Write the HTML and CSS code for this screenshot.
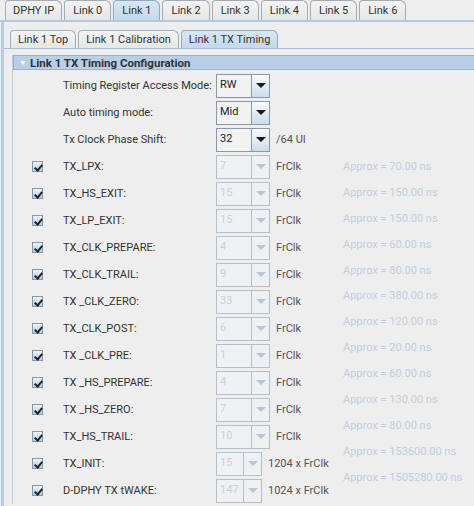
FILE: index.html
```html
<!DOCTYPE html>
<html lang="en">
<head>
    <meta charset="UTF-8">
    <title>Link 1 TX Timing</title>
    <link rel="stylesheet" href="styles.css">
</head>
<body>
    <div class="tabs top-tabs">
        <div class="tab wide">DPHY IP</div>
        <div class="tab">Link 0</div>
        <div class="tab active">Link 1</div>
        <div class="tab">Link 2</div>
        <div class="tab">Link 3</div>
        <div class="tab">Link 4</div>
        <div class="tab">Link 5</div>
        <div class="tab">Link 6</div>
    </div>

    <div class="panel">
        <div class="tabs sub-tabs">
            <div class="tab">Link 1 Top</div>
            <div class="tab">Link 1 Calibration</div>
            <div class="tab active">Link 1 TX Timing</div>
        </div>

        <div class="section">
            <div class="section-head"><span class="caret"></span>Link 1 TX Timing Configuration</div>

            <div class="form">
                <div class="rows">
                    <div class="row">
                        <div class="cell"></div>
                        <div class="label">Timing Register Access Mode:</div>
                        <div class="field"><div class="combo"><span class="value">RW</span><span class="arrow"></span></div></div>
                    </div>
                    <div class="row">
                        <div class="cell"></div>
                        <div class="label">Auto timing mode:</div>
                        <div class="field"><div class="combo"><span class="value">Mid</span><span class="arrow"></span></div></div>
                    </div>
                    <div class="row">
                        <div class="cell"></div>
                        <div class="label">Tx Clock Phase Shift:</div>
                        <div class="field"><div class="combo"><span class="value">32</span><span class="arrow"></span></div><span class="unit">/64 UI</span></div>
                    </div>
                    <div class="row">
                        <div class="cell"><span class="check"></span></div>
                        <div class="label">TX_LPX:</div>
                        <div class="field"><div class="combo disabled"><span class="value">7</span><span class="arrow"></span></div><span class="unit">FrClk</span></div>
                    </div>
                    <div class="row">
                        <div class="cell"><span class="check"></span></div>
                        <div class="label">TX_HS_EXIT:</div>
                        <div class="field"><div class="combo disabled"><span class="value">15</span><span class="arrow"></span></div><span class="unit">FrClk</span></div>
                    </div>
                    <div class="row">
                        <div class="cell"><span class="check"></span></div>
                        <div class="label">TX_LP_EXIT:</div>
                        <div class="field"><div class="combo disabled"><span class="value">15</span><span class="arrow"></span></div><span class="unit">FrClk</span></div>
                    </div>
                    <div class="row">
                        <div class="cell"><span class="check"></span></div>
                        <div class="label">TX_CLK_PREPARE:</div>
                        <div class="field"><div class="combo disabled"><span class="value">4</span><span class="arrow"></span></div><span class="unit">FrClk</span></div>
                    </div>
                    <div class="row">
                        <div class="cell"><span class="check"></span></div>
                        <div class="label">TX_CLK_TRAIL:</div>
                        <div class="field"><div class="combo disabled"><span class="value">9</span><span class="arrow"></span></div><span class="unit">FrClk</span></div>
                    </div>
                    <div class="row">
                        <div class="cell"><span class="check"></span></div>
                        <div class="label">TX _CLK_ZERO:</div>
                        <div class="field"><div class="combo disabled"><span class="value">33</span><span class="arrow"></span></div><span class="unit">FrClk</span></div>
                    </div>
                    <div class="row">
                        <div class="cell"><span class="check"></span></div>
                        <div class="label">TX_CLK_POST:</div>
                        <div class="field"><div class="combo disabled"><span class="value">6</span><span class="arrow"></span></div><span class="unit">FrClk</span></div>
                    </div>
                    <div class="row">
                        <div class="cell"><span class="check"></span></div>
                        <div class="label">TX _CLK_PRE:</div>
                        <div class="field"><div class="combo disabled"><span class="value">1</span><span class="arrow"></span></div><span class="unit">FrClk</span></div>
                    </div>
                    <div class="row">
                        <div class="cell"><span class="check"></span></div>
                        <div class="label">TX _HS_PREPARE:</div>
                        <div class="field"><div class="combo disabled"><span class="value">4</span><span class="arrow"></span></div><span class="unit">FrClk</span></div>
                    </div>
                    <div class="row">
                        <div class="cell"><span class="check"></span></div>
                        <div class="label">TX _HS_ZERO:</div>
                        <div class="field"><div class="combo disabled"><span class="value">7</span><span class="arrow"></span></div><span class="unit">FrClk</span></div>
                    </div>
                    <div class="row">
                        <div class="cell"><span class="check"></span></div>
                        <div class="label">TX_HS_TRAIL:</div>
                        <div class="field"><div class="combo disabled"><span class="value">10</span><span class="arrow"></span></div><span class="unit">FrClk</span></div>
                    </div>
                    <div class="row">
                        <div class="cell"><span class="check"></span></div>
                        <div class="label">TX_INIT:</div>
                        <div class="field"><div class="combo disabled narrow"><span class="value">15</span><span class="arrow"></span></div><span class="unit">1204 x FrClk</span></div>
                    </div>
                    <div class="row">
                        <div class="cell"><span class="check"></span></div>
                        <div class="label">D-DPHY TX tWAKE:</div>
                        <div class="field"><div class="combo disabled narrow"><span class="value">147</span><span class="arrow"></span></div><span class="unit">1024 x FrClk</span></div>
                    </div>
                </div>

                <div class="approx">
                    <div>Approx = 70.00 ns</div>
                    <div>Approx = 150.00 ns</div>
                    <div>Approx = 150.00 ns</div>
                    <div>Approx = 60.00 ns</div>
                    <div>Approx = 80.00 ns</div>
                    <div>Approx = 380.00 ns</div>
                    <div>Approx = 120.00 ns</div>
                    <div>Approx = 20.00 ns</div>
                    <div>Approx = 60.00 ns</div>
                    <div>Approx = 130.00 ns</div>
                    <div>Approx = 80.00 ns</div>
                    <div>Approx = 153600.00 ns</div>
                    <div>Approx = 1505280.00 ns</div>
                </div>
            </div>
        </div>
    </div>
</body>
</html>
```

FILE: styles.css
```css
* {
    margin: 0;
    padding: 0;
    box-sizing: border-box;
}

body {
    font-family: Roboto, "Liberation Sans", sans-serif;
    font-size: 11px;
    color: #333333;
    background: #eeeeee;
    width: 474px;
    height: 506px;
    overflow: hidden;
}

/* tab strips */
.tabs {
    display: flex;
    align-items: flex-end;
    gap: 2px;
}

.tab {
    height: 20px;
    padding: 0 8px;
    line-height: 19px;
    font-size: 11px;
    color: #333333;
    background: linear-gradient(#f4f4f4, #e6e6e6);
    border: 1px solid #a3acb6;
    border-bottom: none;
    border-radius: 4px 6px 0 0;
}

.tab.wide {
    padding: 0 7px;
}

.tab.active {
    background: linear-gradient(#d9e7f4, #c4d8ec);
    border-color: #93a9c0;
}

.top-tabs {
    padding: 2px 0 0 5px;
    height: 22px;
    border-bottom: 2px solid #b2c9e1;
}

.panel {
    border-left: 3px solid #b5cce4;
    margin-left: 1px;
    height: 484px;
    padding-top: 8px;
}

.sub-tabs {
    padding-left: 6px;
    height: 19px;
    border-bottom: 1px solid #a8bfd7;
}

.sub-tabs .tab {
    height: 18px;
    line-height: 17px;
    padding: 0 7px;
}

.section {
    margin: 6px 0 0 8px;
    border-left: 1px solid #b8cbe0;
}

.section-head {
    height: 15px;
    line-height: 14px;
    font-weight: bold;
    font-size: 11.5px;
    color: #2e3338;
    background: #b8cfe7;
    border: 1px solid #9bb2c9;
    border-right: none;
    padding-left: 6px;
    display: flex;
    align-items: center;
}

.caret {
    width: 0;
    height: 0;
    border-left: 3px solid transparent;
    border-right: 3px solid transparent;
    border-top: 4px solid #f2f6fa;
    margin-right: 4px;
}

/* form body */
.form {
    display: flex;
    padding-top: 2px;
}

.rows {
    width: 330px;
}

.row {
    display: grid;
    grid-template-columns: 50px 153px auto;
    height: 27px;
    align-items: center;
}

.cell {
    padding-left: 19px;
    display: flex;
    align-items: center;
}

.check {
    width: 11px;
    height: 11px;
    border: 1px solid #8797a8;
    background: linear-gradient(#eef3f8, #b9cbe0);
    position: relative;
}

.check::after {
    content: "";
    position: absolute;
    left: 3px;
    top: 1px;
    width: 3px;
    height: 6px;
    border-right: 2px solid #1c2430;
    border-bottom: 2px solid #1c2430;
    transform: rotate(40deg);
}

.label {
    color: #333333;
    white-space: nowrap;
}

.field {
    display: flex;
    align-items: center;
    gap: 6px;
}

.combo {
    display: flex;
    width: 54px;
    height: 24px;
    border: 1px solid #8798ab;
    background: #f2f2f2;
}

.combo .value {
    flex: 1;
    padding: 3px 0 0 3px;
    color: #222222;
    border-right: 1px solid #8798ab;
    line-height: 14px;
}

.combo .arrow {
    width: 17px;
    background: linear-gradient(#fbfcfd, #ccdcec);
    display: flex;
    align-items: center;
    justify-content: center;
}

.combo .arrow::before {
    content: "";
    border-left: 5px solid transparent;
    border-right: 5px solid transparent;
    border-top: 5px solid #1a1a1a;
}

.combo.narrow {
    width: 46px;
}

.combo.disabled {
    border-color: #b2c0ce;
    background: #f0f1f2;
}

.combo.disabled .value {
    color: #c5d1dc;
    border-right-color: #b2c0ce;
}

.combo.disabled .arrow {
    background: #eef0f2;
}

.combo.disabled .arrow::before {
    border-top-color: #b3c6da;
}

.unit {
    color: #555555;
    white-space: nowrap;
}

.approx {
    padding-top: 82px;
    color: #c0cfe0;
    white-space: nowrap;
}

.approx div {
    height: 25.9px;
    line-height: 26px;
}
```
